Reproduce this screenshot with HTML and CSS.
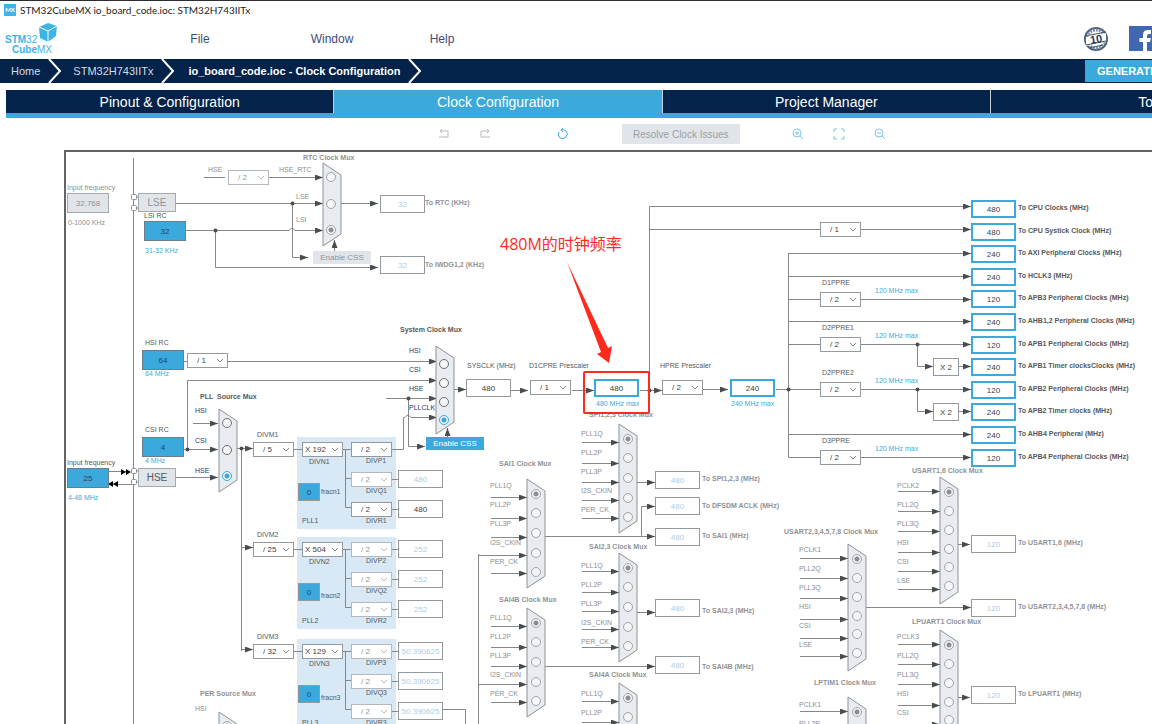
FILE: index.html
```html
<!DOCTYPE html>
<html lang="en">
<head>
    <meta charset="UTF-8">
    <meta name="viewport" content="width=device-width, initial-scale=1.0">
    <title>STM32CubeMX io_board_code.ioc: STM32H743IITx</title>
    <link rel="stylesheet" href="styles.css">
</head>
<body>
    <header class="titlebar">
        <span class="app-icon">MX</span>
        <span>STM32CubeMX io_board_code.ioc: STM32H743IITx</span>
    </header>

    <div class="menubar">
        <svg class="logo" width="56" height="36" viewBox="0 0 56 36" role="img" aria-label="STM32CubeMX">
            <polygon points="35,6 44,2 53,5 52,15 44,21 36,17" fill="#3cb4e6"/>
            <path d="M35 6l9 4 9-5M44 10v11" stroke="#fff" fill="none"/>
            <text x="1" y="22"><tspan class="logo-strong">STM</tspan>32</text>
            <text x="8" y="32"><tspan class="logo-strong">Cube</tspan>MX</text>
        </svg>
        <nav class="menu">
            <button>File</button>
            <button>Window</button>
            <button>Help</button>
        </nav>
        <div class="social">
            <svg width="26" height="26" viewBox="0 0 26 26" role="img" aria-label="10 years">
                <circle cx="13" cy="13" r="11" fill="#fff" stroke="#4a607a" stroke-width="2"/>
                <circle cx="13" cy="13" r="9" fill="none" stroke="#8795a8" stroke-width="3" stroke-dasharray="2 1"/>
                <path d="M3 11l20-4v9l-20 4z" fill="#fff"/>
                <path d="M2 10l21-4M3 19l20-4M6 22l14-3" stroke="#3d5470" fill="none"/>
                <text class="badge-text" x="13" y="17" text-anchor="middle" transform="rotate(-10 13 13)">10</text>
            </svg>
            <svg width="25" height="25" viewBox="0 0 25 25" role="img" aria-label="Facebook">
                <rect width="25" height="25" fill="#4267b2"/>
                <path d="M14 25v-9h-3.500v-4h3.500v-3q0-5 5-5h3v4h-2q-2 0-2 2v2h4l-1 4h-3v9z" fill="#fff"/>
            </svg>
        </div>
    </div>

    <nav class="breadcrumb">
        <a href="#">Home</a>
        <svg width="14" height="24" viewBox="0 0 14 24"><path d="M1 0l11 12-11 12"/></svg>
        <a href="#">STM32H743IITx</a>
        <svg width="14" height="24" viewBox="0 0 14 24"><path d="M1 0l11 12-11 12"/></svg>
        <a href="#" class="current">io_board_code.ioc - Clock Configuration</a>
        <svg width="14" height="24" viewBox="0 0 14 24"><path d="M1 0l11 12-11 12"/></svg>
        <button class="generate">GENERATE CODE</button>
    </nav>

    <div class="tabs">
        <button>Pinout &amp; Configuration</button>
        <button class="active">Clock Configuration</button>
        <button>Project Manager</button>
        <button>Tools</button>
    </div>

    <div class="toolbar">
        <button aria-label="Undo" disabled><svg width="12" height="12" viewBox="0 0 12 12"><path d="M4 1L2 3l2 2M2 3h8v6H1"/></svg></button>
        <button aria-label="Redo" disabled><svg width="12" height="12" viewBox="0 0 12 12"><path d="M8 1l2 2-2 2M10 3H2v6h9"/></svg></button>
        <button class="reset" aria-label="Reset"><svg width="12" height="12" viewBox="0 0 12 12"><path d="M2 4q-2 3 1 6 3 2 6-1 3-3 0-6-2-2-5-1M6 0L4 2l2 2"/></svg></button>
        <button class="resolve" disabled>Resolve Clock Issues</button>
        <button aria-label="Zoom in"><svg width="12" height="12" viewBox="0 0 12 12"><circle cx="5" cy="5" r="4"/><path d="M8 8l3 3M3 5h4M5 3v4"/></svg></button>
        <button aria-label="Fit"><svg width="12" height="12" viewBox="0 0 12 12"><path d="M1 4V1h3M8 1h3v3M11 8v3H8M4 11H1V8"/></svg></button>
        <button aria-label="Zoom out"><svg width="12" height="12" viewBox="0 0 12 12"><circle cx="5" cy="5" r="4"/><path d="M8 8l3 3M3 5h4"/></svg></button>
    </div>

    <main class="canvas" id="canvas">
        <svg class="wires" id="wires">
            <defs>
                <marker id="arrow" viewBox="0 0 8 6" refX="8" refY="3" markerWidth="8" markerHeight="6" markerUnits="userSpaceOnUse" orient="auto">
                    <path d="M0 0l8 3-8 3z" fill="#4a4d50"/>
                </marker>
            </defs>
            <g id="drawing"></g>
        </svg>
    </main>

    <script src="script.js"></script>
</body>
</html>
```
FILE: styles.css
```css
* {
    box-sizing: border-box;
}

body {
    margin: 0;
    height: 100vh;
    display: flex;
    flex-direction: column;
    overflow: hidden;
    background-color: white;
    font-family: "Liberation Sans", Arial, sans-serif;
}

button, input, select {
    font-family: inherit;
    margin: 0;
    border: none;
    border-radius: 0;
    padding: 0;
}

/* Window title */
.titlebar {
    display: flex;
    align-items: center;
    gap: 4px;
    height: 18px;
    padding-left: 4px;
    border-top: 1px solid #2b2d33;
    font-family: Lato, sans-serif;
    font-size: 10px;
    line-height: 14px;
    color: #222;
}

.app-icon {
    width: 12px;
    height: 12px;
    background-color: #3cb4e6;
    color: white;
    font-size: 6px;
    font-weight: bold;
    line-height: 12px;
    text-align: center;
}

/* Menu */
.menubar {
    display: flex;
    align-items: center;
    height: 41px;
    padding-left: 4px;
    overflow: hidden;
}

.logo {
    font-size: 10px;
    fill: #3cb4e6;
}

.logo-strong {
    font-weight: bold;
}

.menu {
    display: flex;
    gap: 76px;
    margin-left: 108px;
}

.menu button {
    min-width: 64px;
    background: none;
    color: #3c4b80;
    font-size: 12px;
    line-height: 16px;
}

.menu button:first-child {
    margin-right: -8px;
}

.menu button:last-child {
    margin-left: -30px;
}

.social {
    display: flex;
    gap: 20px;
    align-items: center;
    margin-left: auto;
    margin-right: -2px;
}

.badge-text {
    font-size: 11px;
    font-weight: bold;
    fill: #1f3a5c;
}

/* Breadcrumb */
.breadcrumb {
    display: flex;
    align-items: center;
    flex: 0 0 24px;
    background-color: #03234b;
    overflow: hidden;
}

.breadcrumb a {
    padding: 0 8px 0 11px;
    font-size: 11px;
    color: #d4dae3;
    text-decoration: none;
    white-space: nowrap;
}

.breadcrumb .current {
    padding: 0 7px 0 13px;
    font-weight: bold;
    color: white;
}

.breadcrumb path {
    fill: none;
    stroke: white;
    stroke-width: 2;
}

.generate {
    flex: 0 0 120px;
    height: 22px;
    margin-left: auto;
    margin-right: -53px;
    background-color: #3ba9dc;
    color: white;
    font-size: 11px;
    font-weight: bold;
    text-align: left;
    padding-left: 12px;
    white-space: nowrap;
}

/* Tabs */
.tabs {
    display: flex;
    flex: 0 0 28px;
    margin: 7px 0 0 6px;
    border-bottom: 5px solid #3ba9dc;
    overflow: hidden;
}

.tabs button {
    flex: 0 0 28.65%;
    background-color: #03234b;
    border-right: 1px solid #c8d0da;
    color: white;
    font-size: 14px;
}

.tabs .active {
    background-color: #3ba9dc;
}

/* Toolbar */
.toolbar {
    display: flex;
    align-items: center;
    flex: 0 0 32px;
    gap: 29px;
    padding-left: 438px;
}

.toolbar button {
    height: 12px;
    background: none;
}

.toolbar svg {
    display: block;
    fill: none;
    stroke: #7cc6ea;
}

.toolbar button:disabled svg {
    stroke: #b4b8bb;
}

.toolbar .reset {
    margin-left: 37px;
}

.toolbar .reset svg {
    stroke: #3ba9dc;
}

.toolbar .resolve {
    height: 20px;
    padding: 0 11px;
    margin: 0 23px 0 24px;
    background-color: #e1e5e9;
    color: #9a9fa4;
    font-size: 10px;
}

/* Clock diagram */
.canvas {
    position: relative;
    flex: 1;
    overflow: hidden;
}

.wires, .marks {
    position: absolute;
    left: 0;
    top: 0;
    width: 100%;
    height: 100%;
}

.marks {
    pointer-events: none;
}

.frame {
    fill: none;
    stroke: #626466;
    stroke-width: 2;
}

.wire {
    fill: none;
    stroke: #85888b;
}

.dot {
    fill: #4a4d50;
}

.pin {
    fill: white;
    stroke: #8d9093;
}

.mux {
    fill: #e8ecf0;
    stroke: #8d9298;
}

.pll {
    fill: #d8e8f5;
}

.label {
    position: absolute;
    font-size: 7px;
    line-height: 8px;
    color: #55585b;
    white-space: pre;
}

.label.muted {
    color: #8c8f92;
}

.label.blue {
    color: #3ba9dc;
}

.label.navy {
    color: #1f3a6a;
}

.label.bold {
    color: #55585b;
    font-weight: bold;
}

.label.bold.muted {
    color: #909396;
}

.label.note {
    font-family: "Open Sans", "Noto Sans CJK SC", sans-serif;
    font-size: 16px;
    color: #ff2a1c;
}

.value, .divider, .action {
    position: absolute;
    font-size: 8px;
    text-align: center;
    color: #3d4043;
    background-color: white;
    border: 1px solid #94999e;
}

.value {
    width: 45px;
    height: 18px;
}

.value:disabled {
    color: #aecbe8;
}

.value.limit {
    border: 2px solid #3ba9dc;
}

.value.source {
    width: 42px;
    height: 20px;
    background-color: #3ba9dc;
    border-color: #6b7d8c;
    color: #1f4668;
}

.value.frac {
    width: 22px;
    background-color: #3ba9dc;
    color: #1f4668;
}

.value.times {
    width: 26px;
}

.value.source:disabled {
    background-color: #e1e5e9;
    border-color: #a4a9ae;
    color: #8f9498;
}

.divider {
    width: 41px;
    height: 15px;
    padding-left: 9px;
    appearance: none;
    text-align: left;
    background-image: url("data:image/svg+xml,%3Csvg xmlns='http://www.w3.org/2000/svg' width='8' height='5'%3E%3Cpath d='M1 1l3 3 3-3' fill='none' stroke='%2385898d'/%3E%3C/svg%3E");
    background-repeat: no-repeat;
    background-position: right 3px center;
}

.divider.wide {
    padding-left: 2px;
}

.divider:disabled {
    color: #8f9396;
    opacity: 1;
    border-color: #b4b8bc;
    background-image: url("data:image/svg+xml,%3Csvg xmlns='http://www.w3.org/2000/svg' width='8' height='5'%3E%3Cpath d='M1 1l3 3 3-3' fill='none' stroke='%23b8bcc0'/%3E%3C/svg%3E");
}

.action {
    width: 58px;
    height: 13px;
    border: none;
    background-color: #3ba9dc;
    color: white;
}

.action:disabled {
    background-color: #e1e5e9;
    color: #8f9498;
}

.action.osc {
    width: 38px;
    height: 19px;
    border: 1px solid #a4a9ae;
    background-color: #e1e5e9;
    color: #55585b;
    font-size: 10px;
}

.action.osc:disabled {
    color: #8f9498;
}

.pick {
    position: absolute;
    width: 10px;
    height: 10px;
    appearance: none;
    border: 1px solid #6d7073;
    border-radius: 50%;
    background-color: #f4f6f8;
}

.pick:checked {
    border-color: #3ba9dc;
    background-image: radial-gradient(circle, #3ba9dc 2px, transparent 3px);
}

.pick:disabled {
    border-color: #a0a4a8;
}

.pick:disabled:checked {
    background-image: radial-gradient(circle, #8a8e92 2px, transparent 3px);
}

.mark {
    fill: none;
    stroke: #ff2a1c;
    stroke-width: 2;
}

.mark-arrow {
    fill: #ff2a1c;
}
```
FILE: script.js
```js
const canvas = document.getElementById('canvas');
const drawing = document.getElementById('drawing');
const TOP = 150; // window y of the canvas, all coordinates below are window ones
const SVG = 'http://www.w3.org/2000/svg';

drawing.setAttribute('transform', `translate(0 ${-TOP})`);

function shape(tag, attrs, parent = drawing) {
    const el = document.createElementNS(SVG, tag);
    for (const key in attrs) el.setAttribute(key, attrs[key]);
    parent.appendChild(el);
    return el;
}

function node(tag, cls, x, y, props = {}) {
    const el = document.createElement(tag);
    el.className = cls;
    el.style.left = x + 'px';
    el.style.top = (y - TOP) + 'px';
    Object.assign(el, props);
    canvas.appendChild(el);
    return el;
}

// y is the middle of the text
function label(text, x, y, cls = '', target = null) {
    const el = node(target ? 'label' : 'span', 'label ' + cls, x, y - 4, { textContent: text });
    if (target) el.htmlFor = target;
}

function value(text, x, y, cls = '', disabled = false, name = 'Frequency') {
    const id = `value-${x}-${y}`;
    node('input', 'value ' + cls, x, y, { id, value: text, disabled, ariaLabel: name });
    return id;
}

function divider(text, x, y, cls = '', disabled = false) {
    const el = node('select', 'divider ' + cls, x, y, { disabled, ariaLabel: 'Divider' });
    el.add(new Option(text));
}

function wire(d, arrow = true) {
    const attrs = { class: 'wire', d };
    if (arrow) attrs['marker-end'] = 'url(#arrow)';
    shape('path', attrs);
}

function dot(cx, cy) {
    shape('circle', { class: 'dot', cx, cy, r: 2 });
}

// offsets from the top of the mux, by number of inputs
const radioSteps = { 3: [14, 41, 67], 4: [18, 37, 56, 74], 5: [15, 34, 54, 74, 93], 6: [15, 34, 53, 72, 90, 109] };
const wireSteps = { 5: [18, 39, 58, 76, 94], 6: [14, 34, 54, 75, 94, 112] };

function mux(m) {
    const r = m.x + 18, n = m.inputs.length;
    shape('path', { class: 'mux', d: `M${m.x} ${m.y}L${r} ${m.y + 12}V${m.end - 12}L${m.x} ${m.end}Z` });
    label(m.title, m.titleX, m.titleY, m.active ? 'bold' : 'bold muted');
    m.inputs.forEach((name, i) => {
        const ly = m.labelYs ? m.labelYs[i] : m.labelY + 19 * i;
        label(name, m.labelX, ly, m.active ? 'navy' : 'muted');
        node('input', 'pick', m.x + (m.x > 500 ? 4 : 3), m.y + radioSteps[n][i] - 5, {
            type: 'radio', name: m.title, checked: i === m.checked, disabled: !m.active, ariaLabel: name
        });
        if (wireSteps[n]) {
            const from = m.bus && name === 'I2S_CKIN' ? 478 : m.labelX + 1;
            wire(`M${from} ${m.y + wireSteps[n][i] + 0.5}H${m.x}`);
        }
    });
}

// Sheet frame and left rail
shape('path', { class: 'frame', d: 'M65 1200V151H4000' });
wire('M133.5 158V1200', false);

// PLL blocks
const plls = [
    { n: 1, y: 437, div: '/ 5', mul: 'X 192', out: ['', '480', '480'], off: [false, true, false] },
    { n: 2, y: 537, div: '/ 25', mul: 'X 504', out: ['252', '252', '252'], off: [true, true, true] },
    { n: 3, y: 639, div: '/ 32', mul: 'X 129', out: ['50.390625', '50.390625', '50.390625'], off: [true, true, true] }
];

plls.forEach(p => {
    const y = p.y, mid = y + 12.5;
    shape('rect', { class: 'pll', x: 297, y, width: 99, height: 92 });
    wire(`M294 ${mid}H302M343 ${mid}H351M345.500 ${mid}V${y + 70.5}H351M345.500 ${y + 41.5}H351`, false);
    if (p.n > 1) wire(`M241.500 ${mid - 2}H253`);
    divider(p.div, 253, y + 5);
    divider(p.mul, 302, y + 5, 'wide');
    label('DIVM' + p.n, 257, y - 2);
    label('DIVN' + p.n, 309, y + 25);
    const frac = value('0', 298, y + 46, 'frac', false, 'fracn' + p.n);
    label('fracn' + p.n, 321, y + 59 - (p.n === 1 ? 4 : 0), '', frac);
    label('PLL' + p.n, 302, y + 84);
    ['P', 'Q', 'R'].forEach((ch, i) => {
        divider('/ 2', 351, y + 5 + 30 * i, '', p.off[i]);
        label('DIV' + ch + p.n, 366, y + 24 + 30 * i);
        if (!p.out[i]) return;
        wire(`M392 ${mid + 30 * i}H398`, false);
        value(p.out[i], 398, y + 3 + 30 * i, '', p.off[i], `DIV${ch}${p.n} output`);
    });
});

// RTC and low speed sources
wire('M204 177.500H225', false);
wire('M269 177.500H323');
wire('M176 203.500H323');
wire('M185 230.500H289Q292 226 295 230.500H323');
wire('M292.500 203V257.500H308');
wire('M215.500 230V267.500H378');
wire('M341 203.500H378');
wire('M334.500 251V240');
dot(292.5, 203.5);
dot(215.5, 230.5);

// High speed sources
wire('M184 361.500H188', false);
wire('M228 361.500H437');
wire('M183 449.500H218');
wire('M187.500 449V380.500H437');
wire('M193 423.500H218');
wire('M176 477.500H218');
wire('M386 398.500H437');
wire('M408.500 398V446.500H425');
wire('M392 449.500H403.500V417.500H405Q408 413 411 417.500H437');
wire('M447.500 437V428');
wire('M237 448.500H253');
wire('M241.500 448V651', false);
dot(187.5, 449.5);
dot(408.5, 398.5);
dot(241.5, 448.5);

// Oscillator pins
[197, 208, 471, 482].forEach(y => {
    wire(`M134 ${y}H139`, false);
    shape('rect', { class: 'pin', x: 131.5, y: y - 2.5, width: 5, height: 5, rx: 1 });
});
wire('M108 471.500H130', false);
wire('M132 484.500H108', false);
shape('path', { d: 'M121 469l5 3-5 3zM126 469l5 3-5 3zM113 481l-5 3 5 3zM118 481l-5 3 5 3z' });

// System clock path
wire('M454 389.500H466');
wire('M511 390.500H528');
wire('M572 390.500H594');
wire('M640 390.500H662');
wire('M649.500 390V206.500H971');
wire('M649.500 229.500H971');
wire('M703 389.500H728');
wire('M776 389.500H971');
wire('M788.500 253V457.500H971');
dot(649.5, 390.5);
dot(788.5, 389.5);
[253.5, 276.5, 299.5, 321.5, 344.5, 434.5].forEach(y => wire(`M788 ${y}H971`));
[344.5, 389.5].forEach(y => {
    wire(`M917.500 ${y}V${y + 22}H933`);
    wire(`M959 ${y + 22}H971`);
    dot(917.5, y);
});

// Peripheral outputs
wire('M637 482.500H655');
wire('M545 536.500H655');
wire('M641.500 536V506.500H655');
wire('M545 666.500H655');
wire('M637 612.500H655');
wire('M478.500 554V1200', false);
wire('M958 544.500H970');
wire('M866 607.500H971');
wire('M958 697.500H970');
wire('M443 709.500H465.500V1200', false);

const saiInputs = ['PLL1Q', 'PLL2P', 'PLL3P', 'I2S_CKIN', 'PER_CK'];
const uart = pclk => [pclk, 'PLL2Q', 'PLL3Q', 'HSI', 'CSI', 'LSE'];

[
    { title: 'RTC Clock Mux', titleX: 303, titleY: 158, x: 323, y: 163, end: 246, inputs: ['HSE_RTC', 'LSE', 'LSI'], labelX: 296, labelYs: [170, 197, 220], checked: 2 },
    { title: 'System Clock Mux', titleX: 400, titleY: 330, x: 436, y: 346, end: 434, inputs: ['HSI', 'CSI', 'HSE', 'PLLCLK'], labelX: 409, labelY: 351, checked: 3, active: true },
    { title: 'PLL  Source Mux', titleX: 200, titleY: 397, x: 219, y: 409, end: 492, inputs: ['HSI', 'CSI', 'HSE'], labelX: 195, labelYs: [411, 441, 471], checked: 2, active: true },
    { title: 'SPI1,2,3 Clock Mux', titleX: 589, titleY: 415, x: 619, y: 424, end: 533, inputs: saiInputs, labelX: 581, labelY: 434, checked: 0 },
    { title: 'SAI1 Clock Mux', titleX: 499, titleY: 464, x: 527, y: 479, end: 588, inputs: saiInputs, labelX: 490, labelY: 486, checked: 0, bus: true },
    { title: 'SAI2,3 Clock Mux', titleX: 589, titleY: 547, x: 619, y: 553, end: 662, inputs: saiInputs, labelX: 581, labelY: 566, checked: 0 },
    { title: 'SAI4B Clock Mux', titleX: 499, titleY: 600, x: 527, y: 608, end: 717, inputs: saiInputs, labelX: 490, labelY: 618, checked: 0, bus: true },
    { title: 'SAI4A Clock Mux', titleX: 589, titleY: 675, x: 619, y: 683, end: 792, inputs: saiInputs, labelX: 581, labelY: 694, checked: 0 },
    { title: 'USART1,6 Clock Mux', titleX: 912, titleY: 471, x: 940, y: 477, end: 604, inputs: uart('PCLK2'), labelX: 897, labelY: 486, checked: 0 },
    { title: 'USART2,3,4,5,7,8 Clock Mux', titleX: 784, titleY: 532, x: 848, y: 544, end: 671, inputs: uart('PCLK1'), labelX: 799, labelY: 550, checked: 0 },
    { title: 'LPUART1 Clock Mux', titleX: 912, titleY: 622, x: 940, y: 630, end: 757, inputs: uart('PCLK3'), labelX: 897, labelY: 637, checked: 0 },
    { title: 'LPTIM1 Clock Mux', titleX: 814, titleY: 683, x: 848, y: 697, end: 824, inputs: ['PCLK1', 'PLL2P', 'PLL3R', 'LSE', 'LSI', 'PER_CK'], labelX: 799, labelY: 705, checked: 0 },
    { title: 'PER Source Mux', titleX: 200, titleY: 694, x: 219, y: 712, end: 795, inputs: ['HSI', 'CSI', 'HSE'], labelX: 195, labelYs: [709, 739, 769], checked: 0 }
].forEach(m => {
    // HSE_RTC has its label next to the divider
    if (m.title === 'RTC Clock Mux') {
        label('HSE_RTC', 279, 170, 'muted');
        m.inputs[0] = '';
    }
    mux(m);
});

// Source boxes
const lse = value('32.768', 67, 193, 'source', true);
const lsi = value('32', 144, 221, 'source');
const hsi = value('64', 142, 350, 'source');
const csi = value('4', 142, 437, 'source');
const hse = value('25', 67, 468, 'source');
label('Input frequency', 67, 188, 'muted', lse);
label('0-1000 KHz', 68, 223, 'muted');
label('LSI RC', 144, 216, '', lsi);
label('31-32 KHz', 145, 251, 'blue');
label('HSI RC', 145, 343, '', hsi);
label('64 MHz', 145, 374, 'blue');
label('CSI RC', 145, 430, '', csi);
label('4 MHz', 145, 461, 'blue');
label('Input frequency', 67, 463, '', hse);
label('4-48 MHz', 68, 498, 'blue');
label('HSE', 208, 170, 'muted');

node('button', 'action osc', 138, 193, { textContent: 'LSE', disabled: true });
node('button', 'action osc', 138, 468, { textContent: 'HSE' });
node('button', 'action', 313, 251, { textContent: 'Enable CSS', disabled: true });
node('button', 'action', 426, 437, { textContent: 'Enable CSS' });

divider('/ 2', 228, 170, '', true);
divider('/ 1', 187, 353);
divider('/ 1', 530, 380);
divider('/ 2', 662, 380);
divider('/ 1', 820, 222);

[['D1PPRE', 292], ['D2PPRE1', 337], ['D2PPRE2', 382], ['D3PPRE', 450]].forEach(([name, y]) => {
    divider('/ 2', 820, y);
    label(name, 822, y - 9);
    label('120 MHz max', 875, y - 1, 'blue');
});

label('SYSCLK (MHz)', 467, 366, '', value('480', 466, 379));
label('D1CPRE Prescaler', 529, 366);
label('480 MHz max', 596, 404, 'blue', value('480', 594, 379, 'limit'));
label('HPRE Prescaler', 660, 366);
label('240 MHz max', 731, 404, 'blue', value('240', 730, 379, 'limit'));
value('X 2', 933, 358, 'times', false, 'Multiplier');
value('X 2', 933, 403, 'times', false, 'Multiplier');

[
    ['480', 'To CPU Clocks (MHz)'],
    ['480', 'To CPU Systick Clock (MHz)'],
    ['240', 'To AXI Peripheral Clocks (MHz)'],
    ['240', 'To HCLK3 (MHz)'],
    ['120', 'To APB3 Peripheral Clocks (MHz)'],
    ['240', 'To AHB1,2 Peripheral Clocks (MHz)'],
    ['120', 'To APB1 Peripheral Clocks (MHz)'],
    ['240', 'To APB1 Timer clocksClocks (MHz)'],
    ['120', 'To APB2 Peripheral Clocks (MHz)'],
    ['240', 'To APB2 Timer clocks (MHz)'],
    ['240', 'To AHB4 Peripheral (MHz)'],
    ['120', 'To APB4 Peripheral Clocks (MHz)']
].forEach(([mhz, name], i) => {
    const y = Math.round(200 + 22.6 * i);
    label(name, 1018, y + 8, 'bold', value(mhz, 971, y, 'limit'));
});

[
    ['32', 'To RTC (KHz)', 380, 195, 425, 203],
    ['32', 'To IWDG1,2 (KHz)', 380, 256, 425, 265],
    ['480', 'To SPI1,2,3 (MHz)', 655, 471, 702, 479],
    ['480', 'To DFSDM ACLK (MHz)', 655, 497, 702, 506],
    ['480', 'To SAI1 (MHz)', 655, 528, 702, 536],
    ['480', 'To SAI2,3 (MHz)', 655, 599, 702, 611],
    ['480', 'To SAI4B (MHz)', 655, 656, 702, 667],
    ['120', 'To USART1,6 (MHz)', 971, 535, 1018, 543],
    ['120', 'To USART2,3,4,5,7,8 (MHz)', 971, 599, 1018, 607],
    ['120', 'To LPUART1 (MHz)', 971, 686, 1018, 694]
].forEach(([freq, name, x, y, lx, ly]) => {
    label(name, lx, ly, 'bold muted', value(freq, x, y, '', true));
});

// Red callout
const marks = shape('svg', { class: 'marks' }, canvas);
const callout = shape('g', { transform: `translate(0 ${-TOP})` }, marks);
shape('rect', { class: 'mark', x: 584, y: 372, width: 65, height: 41, rx: 1 }, callout);
shape('path', { class: 'mark-arrow', d: 'M567 262L608 348 612 346 609 363 597 354 601 352Z' }, callout);
label('480M的时钟频率', 500, 244, 'note');
```
